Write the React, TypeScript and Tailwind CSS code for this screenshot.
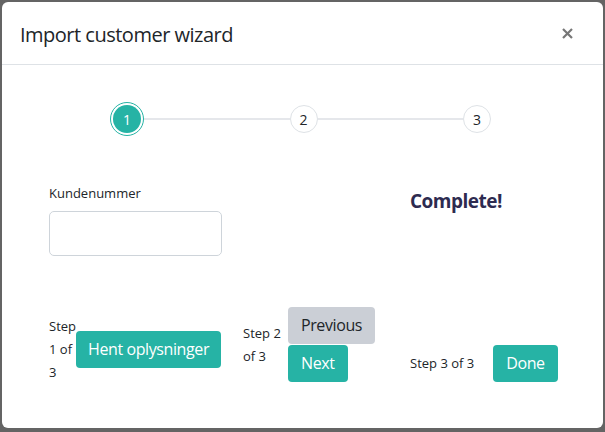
import React from 'react';

const TEAL = 'bg-[#26b3a5]';

const Skridt = ({ n, aktiv }: { n: number; aktiv?: boolean }) => {
  if (aktiv) {
    return (
      <div className="w-[34px] h-[34px] rounded-full border-[1.5px] border-[#26b3a5] p-[2px] shrink-0">
        <div className={`w-full h-full rounded-full ${TEAL} text-white text-[14px] flex items-center justify-center`}>
          {n}
        </div>
      </div>
    );
  }
  return (
    <div className="w-[28px] h-[28px] rounded-full border border-[#dee2e6] bg-white text-[#212529] text-[14px] flex items-center justify-center shrink-0">
      {n}
    </div>
  );
};

export default function App() {
  return (
    <div className="w-[605px] h-[432px] bg-[#646464] pt-[2px] pl-[2px] pr-[2px] pb-[4px] font-['Open_Sans',sans-serif] text-[#212529]">
      <div className="h-full bg-white rounded-md flex flex-col overflow-hidden">
        {/* Header */}
        <div className="h-[63px] shrink-0 border-b border-[#dee2e6] flex items-center justify-between pl-[18px] pr-[30px] pt-[3px]">
          <h5 className="text-[20px] leading-none tracking-[-0.5px]">Import customer wizard</h5>
          <svg width="11" height="11" viewBox="0 0 11 11" className="text-[#777] -mt-[3px]">
            <path d="M1 1 L10 10 M10 1 L1 10" stroke="currentColor" strokeWidth="2.2" />
          </svg>
        </div>

        {/* Stepper */}
        <div className="mt-[37px] ml-[108px] w-[381px] flex items-center">
          <Skridt n={1} aktiv />
          <div className="flex-1 h-[2px] bg-[#e5e7eb]" />
          <Skridt n={2} />
          <div className="flex-1 h-[2px] bg-[#e5e7eb]" />
          <Skridt n={3} />
        </div>

        {/* Kolonner */}
        <div className="mt-[49px] h-[199px] flex pl-[47px] text-[13px] leading-[23px]">
          <div className="w-[173px] flex flex-col justify-between">
            <div>
              <label className="block text-[13px] leading-[16px]">Kundenummer</label>
              <input className="mt-[10px] w-[173px] h-[45px] border border-[#ced4da] rounded-[5px] outline-none" />
            </div>
            <div className="flex items-center">
              <span className="w-[27px] shrink-0">Step 1 of 3</span>
              <button className={`${TEAL} text-white text-[16px] tracking-[-0.4px] h-[37px] px-[12px] rounded-[4px] whitespace-nowrap`}>
                Hent oplysninger
              </button>
            </div>
          </div>

          <div className="ml-[21px] w-[150px] flex flex-col justify-end pb-[2px]">
            <div className="flex items-center">
              <span className="w-[45px] shrink-0">Step 2 of 3</span>
              <div className="flex flex-col items-start gap-[1px]">
                <button className="bg-[#cbcfd6] text-[#212529] text-[16px] tracking-[-0.4px] h-[37px] px-[13px] rounded-[4px]">
                  Previous
                </button>
                <button className={`${TEAL} text-white text-[16px] tracking-[-0.4px] h-[37px] px-[13px] rounded-[4px]`}>
                  Next
                </button>
              </div>
            </div>
          </div>

          <div className="ml-[17px] flex-1 flex flex-col justify-between pb-[2px]">
            <h4 className="mt-[4px] text-[19px] leading-[24px] font-bold tracking-[-0.5px] text-[#2d2b50]">Complete!</h4>
            <div className="flex items-center gap-[19px]">
              <span className="whitespace-nowrap">Step 3 of 3</span>
              <button className={`${TEAL} text-white text-[16px] tracking-[-0.4px] h-[37px] px-[13px] rounded-[4px]`}>
                Done
              </button>
            </div>
          </div>
        </div>
      </div>
    </div>
  );
}
